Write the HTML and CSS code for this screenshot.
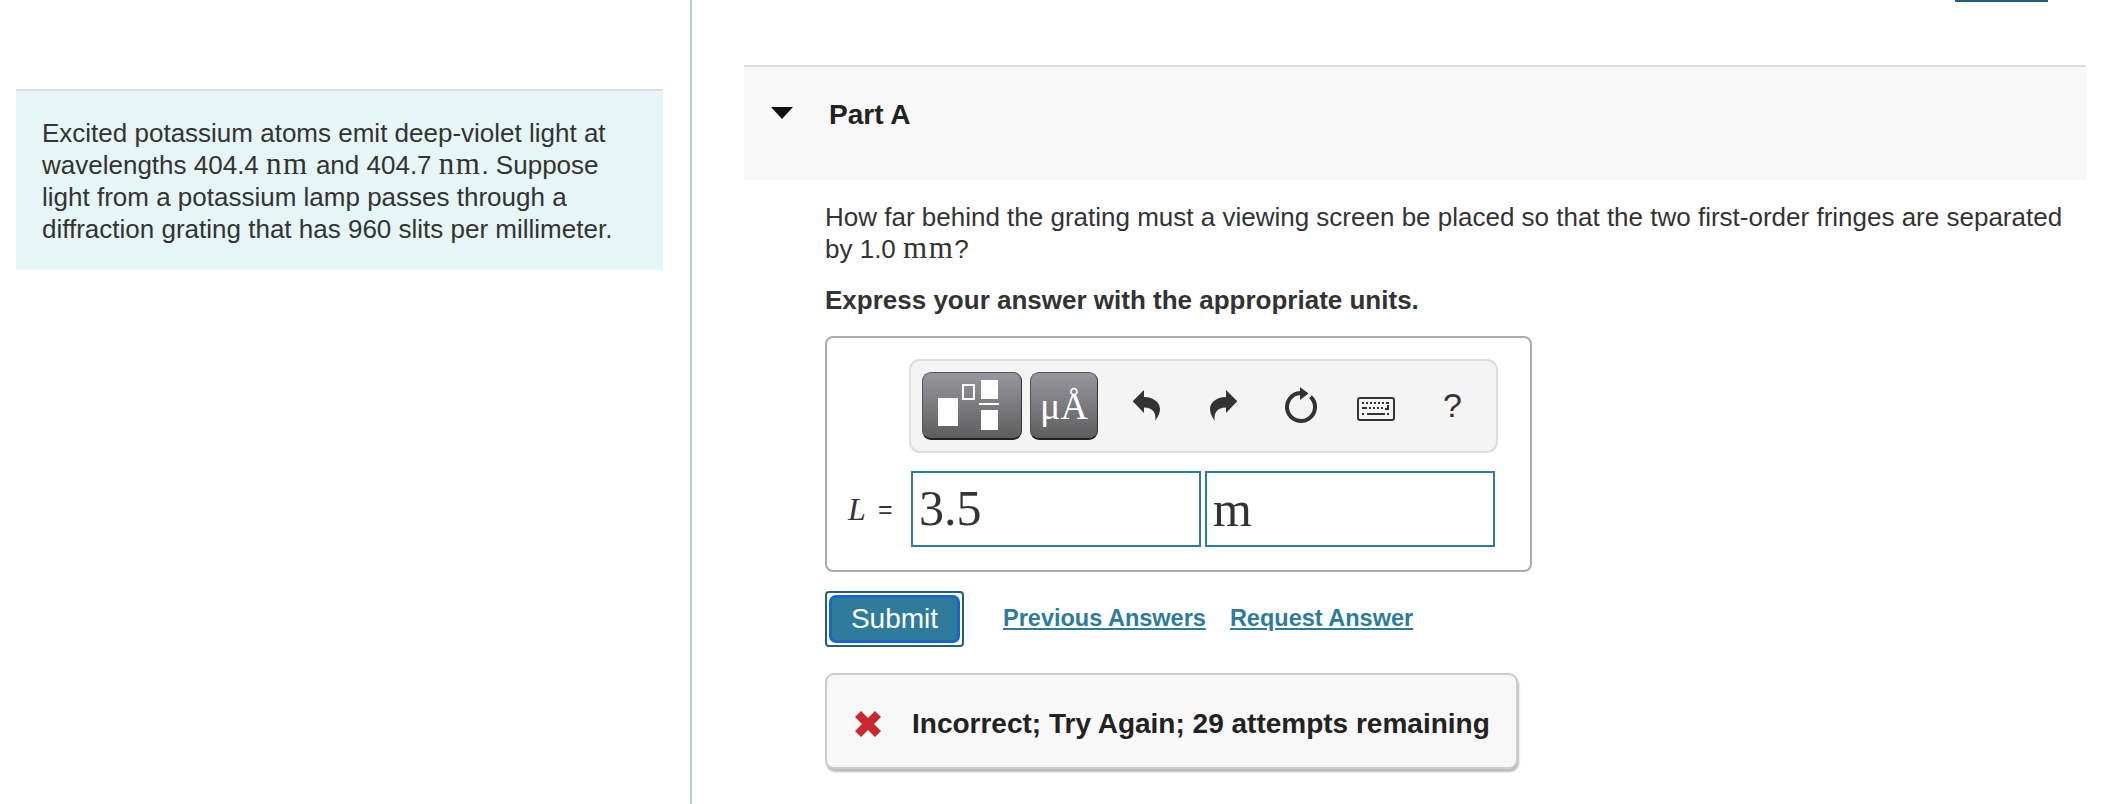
FILE: index.html
```html
<!DOCTYPE html>
<html lang="en">
<head>
<meta charset="utf-8">
<title>Part A</title>
<link rel="stylesheet" href="styles.css">
</head>
<body>
<div class="page">
  <aside class="side">
    <div class="intro">
      <p>Excited potassium atoms emit deep-violet light at wavelengths 404.4 <span class="math">nm</span> and 404.7 <span class="math">nm</span>. Suppose light from a potassium lamp passes through a diffraction grating that has 960 slits per millimeter.</p>
    </div>
  </aside>
  <main class="main">
    <div class="topbar"><span class="topmark"></span></div>
    <header class="part-head">
      <span class="caret"></span>
      <h2 class="part-title">Part A</h2>
    </header>
    <section class="part-body">
      <p class="question">How far behind the grating must a viewing screen be placed so that the two first-order fringes are separated by 1.0 <span class="math">mm</span>?</p>
      <p class="instruct">Express your answer with the appropriate units.</p>
      <div class="answer">
        <div class="toolbar">
          <button class="tool tool-template" type="button" aria-label="Templates">
            <svg class="ico" width="100" height="68" viewBox="0 0 100 68">
              <rect x="16" y="26" width="20" height="28" fill="#fff"/>
              <rect x="41" y="13" width="11" height="14" fill="none" stroke="#fff" stroke-width="2"/>
              <rect x="59" y="8" width="17" height="19" fill="#fff"/>
              <rect x="57" y="31" width="20" height="2" fill="#fff"/>
              <rect x="59" y="38" width="17" height="20" fill="#fff"/>
            </svg>
          </button>
          <button class="tool tool-units" type="button">μÅ</button>
          <svg class="ico ico-undo" width="30" height="34" viewBox="12 13 30 34"><path fill="#333" d="M12.7 25.3 24 14v7c10 0 16 6 16 12 0 5-3 9-4.700 12 1-7-1.300-13.500-11.300-13.500V37z"/></svg>
          <svg class="ico ico-redo" width="30" height="34" viewBox="12 13 30 34"><path fill="#333" d="M41.300 25.3 30 14v7c-10 0-16 6-16 12 0 5 3 9 4.700 12-1-7 1.300-13.500 11.300-13.500V37z"/></svg>
          <svg class="ico ico-reset" width="34" height="38" viewBox="13 11 34 38"><path fill="none" stroke="#333" stroke-width="4" d="M29.500 18A14 14 0 1 0 39.500 21.700"/><path fill="#333" d="M29 12 37.500 18.500 29 25z"/></svg>
          <svg class="ico ico-keys" width="38" height="24" viewBox="0 0 38 24">
            <rect x="1" y="1" width="36" height="22" rx="2" fill="none" stroke="#333" stroke-width="2"/>
            <path fill="#333" d="M5 5h2v2H5zM9 5h2v2H9zM13 5h2v2h-2zM17 5h2v2h-2zM21 5h2v2h-2zM25 5h2v2h-2zM29 5h3v2h-3zM5 10h5v2H5zM12 10h2v2h-2zM16 10h2v2h-2zM20 10h2v2h-2zM24 10h2v2h-2zM30 8h2v5h-4v-2h2zM5 16h2v2H5zM10 16h18v2H10zM30 16h2v2h-2z"/>
          </svg>
          <span class="tool-help">?</span>
        </div>
        <div class="entry">
          <span class="var"><i>L</i><span class="eq">=</span></span>
          <input class="field field-value" type="text" value="3.5" aria-label="Value">
          <input class="field field-unit" type="text" value="m" aria-label="Units">
        </div>
      </div>
      <div class="actions">
        <button class="submit" type="button"><span>Submit</span></button>
        <a class="link link-prev" href="#">Previous Answers</a>
        <a class="link" href="#">Request Answer</a>
      </div>
      <div class="feedback">
        <svg class="x" width="28" height="28" viewBox="0 0 28 28"><path fill="#c9282d" d="M7 1 14 8l7-7 6 6-7 7 7 7-6 6-7-7-7 7-6-6 7-7-7-7z"/></svg>
        <strong>Incorrect; Try Again; 29 attempts remaining</strong>
      </div>
    </section>
  </main>
</div>
</body>
</html>
```
FILE: styles.css
```css
* { box-sizing: border-box; }
html, body { margin: 0; height: 804px; overflow: hidden; background: #fff; }
body { font-family: "Liberation Sans", Arial, sans-serif; color: #333; font-size: 26px; }
p { margin: 0; }
.math { font-family: "Liberation Serif", serif; font-size: 31px; letter-spacing: 1.5px; line-height: 0; }

.page { display: flex; height: 804px; }

.side { width: 692px; flex: none; border-right: 2px solid #b9c9de; padding: 89px 27px 0 16px; }
.intro { height: 181px; background: #e6f5f5; border-top: 2px solid #ddd; padding: 26px 45px 0 26px; line-height: 32px; color: #333; }

.main { flex: 1; padding: 0 34px 0 52px; min-width: 0; }
.topbar { height: 65px; display: flex; justify-content: flex-end; padding-right: 38px; }
.topmark { width: 93px; height: 2px; background: #22607a; }

.part-head { height: 115px; background: #f8f8f8; border-top: 2px solid #ddd; display: flex; align-items: flex-start; padding: 32px 0 0 27px; }
.caret { width: 0; height: 0; border-style: solid; border-width: 12px 11px 0; border-color: #111 transparent transparent; margin-top: 8px; }
.part-title { margin: 0 0 0 36px; font-size: 28px; line-height: 32px; font-weight: 700; color: #222; }

.part-body { padding: 21px 0 0 81px; }
.question { line-height: 32px; width: 1245px; }
.instruct { font-weight: 700; margin-top: 19px; line-height: 32px; }

.answer { width: 707px; height: 236px; margin-top: 20px; border: 2px solid #aaa; border-radius: 8px; padding: 21px 0 0 0; }
.toolbar { width: 589px; height: 94px; margin-left: 82px; background: #f4f4f4; border: 2px solid #ddd; border-radius: 11px; display: flex; align-items: center; padding-left: 11px; }
.tool { height: 68px; padding: 0; border: 1px solid #555; border-bottom: 2px solid #222; border-right-color: #333; border-radius: 9px; background: linear-gradient(#98979f, #5e5e5e); color: #fff; display: block; }
.tool-template { width: 100px; }
.tool-units { width: 68px; margin-left: 8px; font-family: "Liberation Serif", serif; font-size: 38px; line-height: 64px; }
.ico { display: block; flex: none; }
.tool-template .ico { margin: -1px 0 0 -1px; }
.ico-undo { margin-left: 34px; }
.ico-redo { margin-left: 46px; }
.ico-reset { margin-left: 46px; margin-top: -2px; }
.ico-keys { margin-left: 39px; margin-top: 6px; }
.tool-help { width: 18px; margin-left: 48px; font-size: 34px; line-height: 40px; color: #333; margin-top: -2px; }

.entry { display: flex; align-items: center; margin-top: 18px; }
.var { width: 84px; flex: none; display: flex; align-items: center; padding-left: 21px; }
.var i { font-family: "Liberation Serif", serif; font-size: 32px; width: 30px; }
.eq { font-size: 25px; }
.field { height: 76px; width: 290px; flex: none; border: 2px solid #2e7b9b; background: #fff; border-radius: 0; outline: 0; color: #333; font-family: "Liberation Serif", serif; font-size: 50px; padding: 0 0 2px 6px; }
.field-unit { margin-left: 4px; font-size: 50px; padding: 0 0 0 6px; }

.actions { display: flex; align-items: center; margin-top: 19px; }
.submit { width: 139px; height: 56px; padding: 0; border: 2px solid #22607a; border-radius: 4px; background: #fff; font: inherit; color: #fff; }
.submit span { display: flex; align-items: center; justify-content: center; height: 48px; margin: 2px; background: #2e7b9b; border: 3px solid #1a66cc; border-radius: 7px; font-size: 28px; }
.link { color: #2e7b9b; font-weight: 700; font-size: 23.5px; text-decoration: underline; }
.link-prev { margin: -2px 24px 0 39px; }
.link:last-child { margin-top: -2px; }

.feedback { width: 693px; height: 96px; margin-top: 26px; background: #f8f8f8; border: 2px solid #ccc; border-radius: 9px; box-shadow: 1px 3px 2px #bbb; display: flex; align-items: center; padding: 6px 0 0 27px; }
.feedback strong { margin-left: 30px; font-size: 28px; color: #222; }
.x { flex: none; }
```
